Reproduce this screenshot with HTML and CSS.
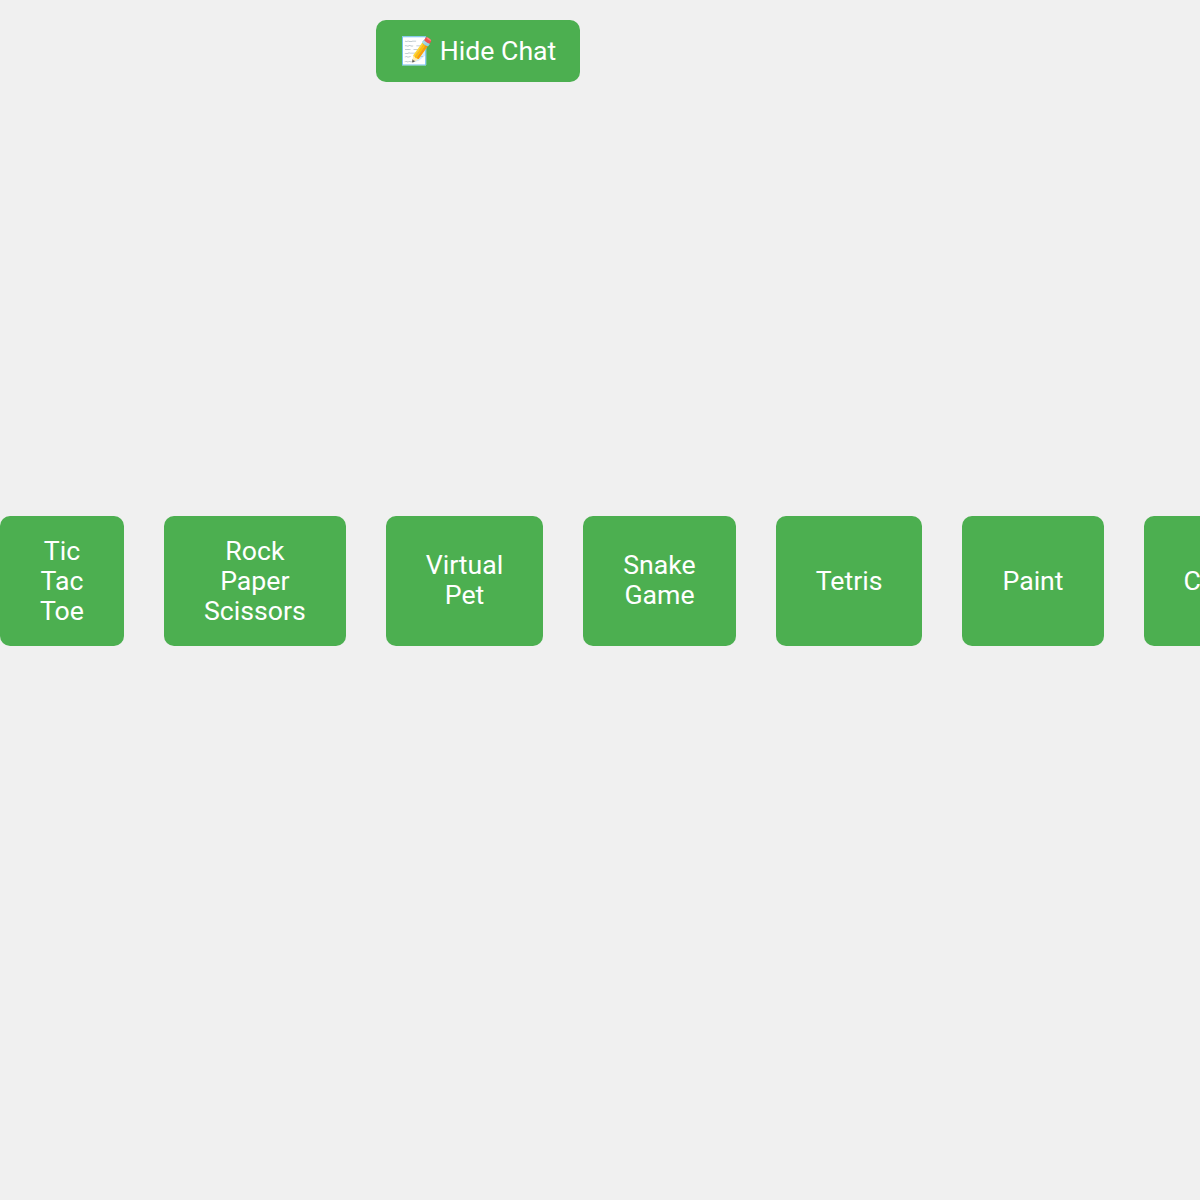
FILE: index.html
```html
<!DOCTYPE html>
<html lang="en">
<head>
<meta charset="utf-8">
<title>Games</title>
<link rel="stylesheet" href="styles.css">
</head>
<body>
<header class="top">
  <button class="btn chat-toggle" type="button">📝 Hide Chat</button>
</header>
<main class="games">
  <button class="btn game" type="button">Tic Tac Toe</button>
  <button class="btn game" type="button">Rock Paper Scissors</button>
  <button class="btn game two-line" type="button">Virtual Pet</button>
  <button class="btn game two-line" type="button">Snake Game</button>
  <button class="btn game" type="button">Tetris</button>
  <button class="btn game" type="button">Paint</button>
  <button class="btn game" type="button">Calculator</button>
</main>
</body>
</html>
```
FILE: styles.css
```css
* { box-sizing: border-box; }
html, body { margin: 0; height: 100%; overflow: hidden; }
body { background: #f0f0f0; font-family: Roboto, "Noto Color Emoji", sans-serif; }
.top { display: flex; padding: 20px 0 0 376px; }
.btn {
  border: 0;
  border-radius: 10px;
  background: #4caf50;
  color: #fff;
  font-family: inherit;
  font-size: 26.67px;
  line-height: 30px;
}
.chat-toggle { padding: 16px 24px; white-space: nowrap; }
.games { display: flex; gap: 40px; margin-top: 434px; }
.game { flex: none; width: min-content; padding: 20px 40px; }
.two-line { padding-bottom: 22px; }
```
